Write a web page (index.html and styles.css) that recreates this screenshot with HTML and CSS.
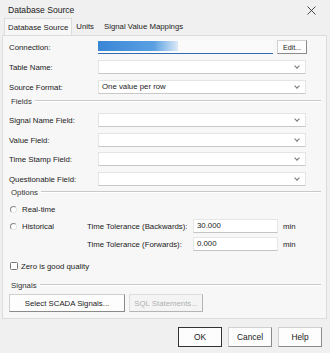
FILE: index.html
```html
<!DOCTYPE html>
<html lang="en">

<head>
  <meta charset="UTF-8">
  <meta name="viewport" content="width=device-width, initial-scale=1.0">
  <title>Database Source</title>
  <link rel="stylesheet" href="styles.css">
</head>

<body>
  <div class="dialog">
    <div class="titlebar">
      <span class="title">Database Source</span>
      <svg class="close" width="9" height="9" viewBox="0 0 9 9">
        <path d="M0.5 0.5 L8.5 8.5 M8.5 0.5 L0.5 8.5" stroke="#333" stroke-width="0.9" fill="none" />
      </svg>
    </div>

    <div class="tabs">
      <div class="tab active">Database Source</div>
      <div class="tab">Units</div>
      <div class="tab">Signal Value Mappings</div>
    </div>

    <div class="panel">
      <div class="row">
        <label class="lbl">Connection:</label>
        <div class="conn">
          <div class="conn-blur"></div>
        </div>
        <button class="btn small">Edit...</button>
      </div>
      <div class="row">
        <label class="lbl">Table Name:</label>
        <div class="combo"></div>
      </div>
      <div class="row">
        <label class="lbl">Source Format:</label>
        <div class="combo">One value per row</div>
      </div>

      <div class="group">Fields</div>
      <div class="row">
        <label class="lbl">Signal Name Field:</label>
        <div class="combo"></div>
      </div>
      <div class="row tight">
        <label class="lbl">Value Field:</label>
        <div class="combo"></div>
      </div>
      <div class="row">
        <label class="lbl">Time Stamp Field:</label>
        <div class="combo"></div>
      </div>
      <div class="row tight">
        <label class="lbl">Questionable Field:</label>
        <div class="combo"></div>
      </div>

      <div class="group">Options</div>
      <div class="options">
        <div class="radios">
          <div class="check"><span class="radio"></span>Real-time</div>
          <div class="check"><span class="radio"></span>Historical</div>
        </div>
        <div class="tolerances">
          <div class="tol">
            <span class="tol-lbl">Time Tolerance (Backwards):</span>
            <div class="edit">30.000</div>
            <span class="unit">min</span>
          </div>
          <div class="tol">
            <span class="tol-lbl">Time Tolerance (Forwards):</span>
            <div class="edit">0.000</div>
            <span class="unit">min</span>
          </div>
        </div>
      </div>
      <div class="check zero"><span class="box"></span>Zero is good quality</div>

      <div class="group">Signals</div>
      <div class="sig-buttons">
        <button class="btn wide">Select SCADA Signals...</button>
        <button class="btn sql" disabled>SQL Statements...</button>
      </div>
    </div>

    <div class="footer">
      <button class="btn action">OK</button>
      <button class="btn action">Cancel</button>
      <button class="btn action">Help</button>
    </div>
  </div>
</body>

</html>
```
FILE: styles.css
```css
* {
  margin: 0;
  padding: 0;
  box-sizing: border-box;
}

:root {
  --bg: #f0f0f0;
  --panel-bg: #f7f7f7;
  --field-border: #dcdcdc;
  --text: #1a1a1a;
  --label-width: 89px;
}

body {
  background: var(--bg);
  font-family: "Liberation Sans", Arial, sans-serif;
  font-size: 7.8px;
  color: var(--text);
}

.dialog {
  width: 330px;
  height: 353px;
  background: var(--bg);
  display: flex;
  flex-direction: column;
}

.titlebar {
  height: 18px;
  display: flex;
  align-items: center;
  justify-content: space-between;
  padding: 2px 14px 0 8px;
  font-size: 8.6px;
}

.tabs {
  display: flex;
  height: 17px;
  padding-left: 4px;
  align-items: flex-end;
}

.tab {
  height: 15px;
  line-height: 14px;
  padding: 0 3px;
  color: #222;
}

.tab.active {
  height: 17px;
  line-height: 17px;
  background: var(--panel-bg);
  border: 1px solid var(--field-border);
  border-bottom: none;
  padding: 0 3px;
  margin-right: 1px;
}

.tab:nth-child(3) {
  margin-left: 4px;
}

.panel {
  margin: 0 3px 0 2px;
  height: 284px;
  background: var(--panel-bg);
  border: 1px solid var(--field-border);
  padding: 4px 20px 0 6px;
  display: flex;
  flex-direction: column;
}

.row {
  display: flex;
  align-items: center;
  height: 14px;
  margin-bottom: 6px;
}

.row.tight {
  margin-bottom: 5px;
}

.lbl {
  width: var(--label-width);
  flex-shrink: 0;
}

.combo {
  flex: 1;
  height: 14px;
  background: #fff;
  border: 1px solid #e4e4e4;
  border-bottom-color: #c8c8c8;
  line-height: 12px;
  padding-left: 3px;
  position: relative;
}

.combo::after {
  content: '';
  position: absolute;
  right: 6px;
  top: 3px;
  width: 3px;
  height: 3px;
  border-right: 1px solid #777;
  border-bottom: 1px solid #777;
  transform: rotate(45deg);
}

.conn {
  width: 175px;
  height: 14px;
  background: #fafafa;
  border-bottom: 1px solid #2f6cb3;
  padding-top: 1px;
}

.conn-blur {
  width: 80px;
  height: 10px;
  background: linear-gradient(90deg, #3a86d6, #5aa0e2 70%, rgba(150, 195, 235, .3));
  filter: blur(.6px);
}

.btn {
  font-family: inherit;
  font-size: 7.8px;
  color: var(--text);
  background: #fdfdfd;
  border: 1px solid #d0d0d0;
  border-right-color: #8a8a8a;
  border-bottom-color: #8a8a8a;
}

.btn.small {
  width: 30px;
  height: 14px;
  margin-left: 4px;
  margin-right: -1px;
  font-size: 7px;
}

.group {
  height: 12px;
  display: flex;
  align-items: center;
  margin: -5px -15px 6px 2px;
  color: #333;
}

.group::after {
  content: '';
  flex: 1;
  margin-left: 3px;
  border-top: 1px solid #c9c9c9;
  border-bottom: 1px solid #fff;
}

.options {
  display: flex;
  height: 49px;
  margin-top: -2px;
}

.radios {
  width: 78px;
  display: flex;
  flex-direction: column;
  gap: 3px;
}

.check {
  display: flex;
  align-items: center;
  height: 14px;
}

.radio {
  width: 7px;
  height: 7px;
  border-radius: 50%;
  border: 1px solid #888;
  border-right-color: #e6e6e6;
  border-bottom-color: #e6e6e6;
  background: #fff;
  margin: 0 5px 0 1px;
}

.tolerances {
  display: flex;
  flex-direction: column;
  gap: 4px;
  padding-top: 17px;
}

.tol {
  display: flex;
  align-items: center;
  height: 14px;
}

.tol-lbl {
  width: 106px;
  white-space: nowrap;
}

.edit {
  width: 85px;
  height: 14px;
  background: #fff;
  border: 1px solid #e6e6e6;
  border-bottom-color: #c4c4c4;
  line-height: 12px;
  padding-left: 3px;
}

.unit {
  margin-left: 5px;
}

.zero {
  margin: 8px 0 11px;
}

.box {
  width: 8px;
  height: 8px;
  border: 1px solid #777;
  border-radius: 1.5px;
  background: #fff;
  margin: 0 3px 0 1px;
}

.sig-buttons {
  display: flex;
  gap: 4px;
  margin-top: -3px;
}

.btn.wide {
  width: 116px;
  height: 18px;
}

.btn.sql {
  width: 74px;
  height: 18px;
  color: #b0b0b0;
  background: #f4f4f4;
  border-color: #dedede;
  border-right-color: #b5b5b5;
  border-bottom-color: #b5b5b5;
}

.footer {
  display: flex;
  justify-content: flex-end;
  gap: 6px;
  padding: 8px 8px 0 0;
}

.btn.action {
  width: 44px;
  height: 20px;
  font-size: 8.4px;
}

.btn.action:first-child {
  border: 1px solid #333;
}
```
